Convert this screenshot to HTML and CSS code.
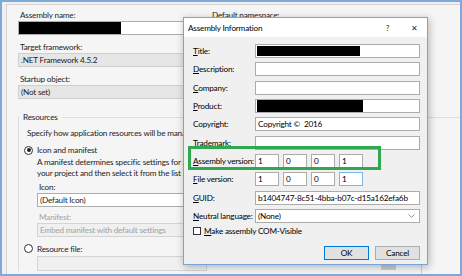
FILE: index.html
```html
<!DOCTYPE html>
<html>
<head>
<meta charset="utf-8">
<link rel="stylesheet" href="styles.css">
</head>
<body>
<div class="screen">
  <div class="panel">
    <div class="top-cols">
      <div class="col-main">
        <div class="lbl">Assembly name:</div>
        <div class="field white"><span class="redact r-name"></span></div>
        <div class="lbl gap">Target framework:</div>
        <div class="field combo">.NET Framework 4.5.2</div>
        <div class="lbl gap">Startup object:</div>
        <div class="field combo">(Not set)</div>
      </div>
      <div class="col-side">
        <div class="lbl">Default namespace:</div>
      </div>
    </div>
    <div class="group">
      <div class="group-title"><span>Resources</span></div>
      <div class="group-body">
        <div class="lbl desc">Specify how application resources will be managed:</div>
        <div class="radio-row first"><span class="radio on"></span><span>Icon and manifest</span></div>
        <div class="indent">
          <div class="para">A manifest determines specific settings for an application. To embed a custom manifest, first add it to<br>your project and then select it from the list below.</div>
          <div class="lbl small">Icon:</div>
          <div class="field white sub">(Default Icon)</div>
          <div class="lbl small dis">Manifest:</div>
          <div class="field disabled sub">Embed manifest with default settings</div>
        </div>
        <div class="radio-row second"><span class="radio"></span><span>Resource file:</span></div>
        <div class="indent">
          <div class="field disabled sub2"></div>
        </div>
      </div>
    </div>
  </div>

  <div class="behind-bits">
    <span class="bit-a"></span>
    <span class="bit-b"></span>
  </div>

  <div class="dialog">
    <div class="titlebar">
      <span class="title">Assembly Information</span>
      <span class="tb-btns"><span class="help">?</span><span class="close">&#x2715;</span></span>
    </div>
    <div class="dbody">
      <div class="rows">
        <div class="dl"><u>T</u>itle:</div>
        <div class="inp"><span class="redact r-title"></span></div>
        <div class="dl"><u>D</u>escription:</div>
        <div class="inp"></div>
        <div class="dl"><u>C</u>ompany:</div>
        <div class="inp"></div>
        <div class="dl"><u>P</u>roduct:</div>
        <div class="inp"><span class="redact r-prod"></span></div>
        <div class="dl">Copyright:</div>
        <div class="inp">Copyright ©&nbsp; 2016</div>
        <div class="dl">Trademark:</div>
        <div class="inp"></div>
        <div class="dl"><u>A</u>ssembly version:</div>
        <div class="ver"><div class="inp">1</div><div class="inp">0</div><div class="inp">0</div><div class="inp">1</div></div>
        <div class="dl"><u>F</u>ile version:</div>
        <div class="ver"><div class="inp">1</div><div class="inp">0</div><div class="inp">0</div><div class="inp focus">1</div></div>
        <div class="dl"><u>G</u>UID:</div>
        <div class="inp">b1404747-8c51-4bba-b07c-d15a162efa6b</div>
        <div class="dl"><u>N</u>eutral language:</div>
        <div class="inp select"><span>(None)</span><svg class="chev" width="7" height="4" viewBox="0 0 7 4"><path d="M0.5 0.5 L3.5 3.3 L6.5 0.5" fill="none" stroke="#888" stroke-width="0.9"/></svg></div>
      </div>
      <div class="check-row"><span class="check"></span><span><u>M</u>ake assembly COM-Visible</span></div>
      <div class="buttons">
        <div class="btn default">OK</div>
        <div class="btn">Cancel</div>
      </div>
    </div>
    <div class="highlight"></div>
  </div>
</div>
</body>
</html>
```
FILE: styles.css
```css
html, body {
  margin: 0;
  padding: 0;
}
body {
  width: 462px;
  height: 276px;
  overflow: hidden;
  background: #f0f0f0;
  font-family: Lato, "Liberation Sans", sans-serif;
  font-size: 8.2px;
  letter-spacing: -0.2px;
  color: #1e1e1e;
}
.screen {
  position: relative;
  width: 458px;
  height: 272px;
  border: 2px solid #7fa9d8;
  background: #f0f0f0;
  overflow: hidden;
}
.panel {
  margin: 2px 0 0 4px;
  height: 270px;
  border-left: 1px solid #d4d4d4;
  border-top: 1px solid #d4d4d4;
  background: #f5f5f5;
  padding: 4px 0 0 11px;
  box-sizing: border-box;
}
.top-cols {
  display: flex;
}
.col-main {
  width: 192px;
  flex: none;
}
.lbl {
  height: 12px;
  line-height: 12px;
  padding-left: 2px;
  white-space: nowrap;
}
.lbl.gap {
  margin-top: 6px;
}
.field {
  height: 14px;
  line-height: 12px;
  box-sizing: border-box;
  border: 1px solid #b9b9b9;
  padding-left: 2px;
  white-space: nowrap;
  overflow: hidden;
}
.field.white {
  background: #fff;
  border-color: #adadad;
}
.field.combo {
  background: #e6e6e6;
  border-color: #cfcfcf;
}
.field.disabled {
  background: #f0f0f0;
  border-color: #d4d4d4;
  color: #a2a2a2;
}
.redact {
  display: block;
  background: #000;
}
.r-name {
  width: 102px;
  height: 12px;
  margin-left: -2px;
}
.group {
  margin-top: 12px;
}
.group-title {
  display: flex;
  align-items: center;
  height: 12px;
  line-height: 12px;
  padding-left: 5px;
}
.group-title::after {
  content: "";
  flex: 1;
  border-top: 1px solid #dcdcdc;
  margin-left: 4px;
}
.group-body {
  border-left: 1px solid #dcdcdc;
  margin-top: -6px;
  padding: 10px 0 0 8px;
}
.lbl.desc {
  padding-left: 0;
}
.radio-row {
  display: flex;
  align-items: center;
  height: 12px;
  line-height: 12px;
  white-space: nowrap;
}
.radio-row.first {
  margin-top: 5px;
  margin-left: -3px;
}
.radio-row.second {
  margin-top: 6px;
  margin-left: -3px;
}
.radio {
  width: 9px;
  height: 9px;
  box-sizing: border-box;
  border: 1px solid #333;
  border-radius: 50%;
  margin-right: 4px;
  position: relative;
  background: #fff;
}
.radio.on::after {
  content: "";
  position: absolute;
  left: 1.5px;
  top: 1.5px;
  width: 4px;
  height: 4px;
  border-radius: 50%;
  background: #222;
}
.indent {
  padding-left: 10px;
}
.para {
  margin-top: 1px;
  line-height: 10.5px;
  white-space: nowrap;
}
.lbl.small {
  margin-top: 4px;
  height: 11px;
  line-height: 11px;
}
.lbl.dis {
  color: #a2a2a2;
  margin-top: 4.5px;
}
.field.sub {
  width: 170px;
}
.field.sub2 {
  width: 170px;
  height: 15px;
  margin-top: 1px;
}
.behind-bits .bit-a {
  position: absolute;
  left: 379px;
  top: 262px;
  width: 15px;
  height: 6px;
  background: #cdcdcd;
}
.behind-bits .bit-b {
  position: absolute;
  left: 419px;
  top: 262px;
  width: 1px;
  height: 10px;
  background: #d0d0d0;
}
/* dialog window */
.dialog {
  position: absolute;
  left: 181px;
  top: 15px;
  width: 245px;
  height: 248px;
  box-sizing: border-box;
  border: 1px solid #7aa3d6;
  background: #f0f0f0;
  box-shadow: 1px 2px 8px rgba(0,0,0,0.28);
  color: #000;
}
.titlebar {
  height: 19px;
  background: #fff;
  display: flex;
  align-items: center;
  justify-content: space-between;
  padding: 0 9px 0 4px;
}
.tb-btns {
  display: flex;
  align-items: center;
  gap: 22px;
  color: #333;
}
.help {
  font-size: 8px;
}
.close {
  font-size: 8px;
}
.dbody {
  padding: 7px 7px 0 9px;
}
.rows {
  display: grid;
  grid-template-columns: 62px 165px;
  grid-auto-rows: 14px;
  row-gap: 4.33px;
  align-items: center;
}
.dl {
  white-space: nowrap;
  line-height: 12px;
}
.inp {
  height: 14px;
  box-sizing: border-box;
  background: #fff;
  border: 1px solid #acacac;
  line-height: 12px;
  padding-left: 2px;
  white-space: nowrap;
  overflow: hidden;
}
.inp.focus {
  border-color: #7eb4ea;
}
.inp.select {
  display: flex;
  align-items: center;
  justify-content: space-between;
  padding-right: 4px;
}
.chev {
  display: block;
}
.ver {
  display: flex;
  gap: 4px;
}
.ver .inp {
  width: 24px;
}
.r-title {
  width: 103px;
  height: 10px;
  margin: 1px 0 0 -1px;
}
.r-prod {
  width: 106px;
  height: 12px;
  margin: 0 0 0 -1px;
}
.check-row {
  display: flex;
  align-items: center;
  height: 11px;
  margin-top: 3px;
  white-space: nowrap;
}
.check {
  width: 8px;
  height: 8px;
  box-sizing: border-box;
  border: 1px solid #333;
  background: #fff;
  margin-right: 3px;
}
.buttons {
  display: flex;
  justify-content: flex-end;
  gap: 6px;
  margin-top: 9px;
}
.btn {
  width: 45px;
  height: 14px;
  box-sizing: border-box;
  border: 1px solid #adadad;
  background: #e1e1e1;
  text-align: center;
  line-height: 12px;
}
.btn.default {
  border-color: #0078d7;
}
.highlight {
  position: absolute;
  left: 4px;
  top: 128px;
  width: 193px;
  height: 24px;
  box-sizing: border-box;
  border: 3px solid #2fa84f;
}
```
